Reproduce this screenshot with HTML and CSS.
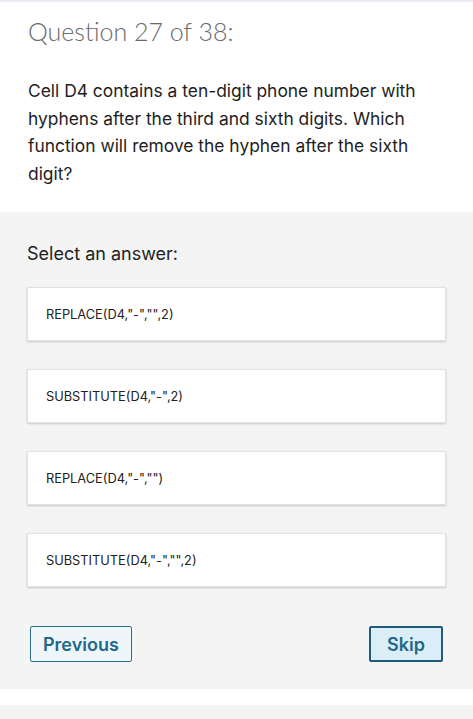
FILE: index.html
```html
<!DOCTYPE html>
<html lang="en">
<head>
    <meta charset="UTF-8">
    <meta name="viewport" content="width=device-width, initial-scale=1.0">
    <title>Question 27 of 38</title>
    <link rel="stylesheet" href="styles.css">
</head>
<body>
    <div class="topShadow"></div>

    <!-- Enunciado -->
    <div class="question">
        <h1 class="questionTitle">Question 27 of 38:</h1>
        <p class="questionText">Cell D4 contains a ten-digit phone number with hyphens after the third and sixth digits. Which function will remove the hyphen after the sixth digit?</p>
    </div>

    <!-- Respuestas -->
    <div class="answers">
        <p class="answersLabel">Select an answer:</p>
        <div class="answerList">
            <div class="answer">REPLACE(D4,"-","",2)</div>
            <div class="answer">SUBSTITUTE(D4,"-",2)</div>
            <div class="answer">REPLACE(D4,"-","")</div>
            <div class="answer">SUBSTITUTE(D4,"-","",2)</div>
        </div>
        <div class="navButtons">
            <button type="button" class="navButton">Previous</button>
            <button type="button" class="navButton skip">Skip</button>
        </div>
    </div>

    <div class="bottomBar"></div>
</body>
</html>
```

FILE: styles.css
```css
body {
    margin: 0;
    background-color: #ffffff;
    font-family: Inter, "Open Sans", sans-serif;
    color: #222;
}

.topShadow {
    height: 3px;
    background: linear-gradient(to bottom, #dfe4ee, #ffffff);
}

.question {
    padding: 13px 28px 25px;
}

.questionTitle {
    margin: 0;
    font-family: Lato, sans-serif;
    font-weight: 300;
    font-size: 25px;
    line-height: 30px;
    color: #6b6b6b;
}

.questionText {
    margin: 31px 0 0;
    font-size: 17.4px;
    line-height: 27.5px;
    color: #1e1e1e;
}

.answers {
    background-color: #f4f4f4;
    padding: 30px 27px 27px;
}

.answersLabel {
    margin: 0;
    font-size: 18px;
    line-height: 24px;
    color: #222;
}

.answerList {
    margin-top: 21px;
    display: flex;
    flex-direction: column;
    gap: 28px;
}

.answer {
    background: #ffffff;
    border: 1px solid #e2e2e2;
    box-shadow: 0 1px 2px rgba(0, 0, 0, 0.18);
    height: 52px;
    padding: 0 18px;
    display: flex;
    align-items: center;
    font-family: Inter, sans-serif;
    font-size: 12.8px;
    color: #222;
}

.navButtons {
    margin-top: 39px;
    display: flex;
    justify-content: space-between;
    padding: 0 3px;
}

.navButton {
    height: 36px;
    padding: 0 12px;
    background-color: #eef6fa;
    border: 1px solid #2b6f8c;
    border-radius: 2px;
    font-family: Inter, sans-serif;
    font-weight: 600;
    font-size: 18px;
    color: #1f6888;
    cursor: pointer;
}

.navButton.skip {
    border: 2px solid #1f5c78;
    background-color: #dbeef7;
    padding: 0 16px;
}

.bottomBar {
    margin-top: 16px;
    height: 14px;
    background-color: #f4f4f4;
}
```
